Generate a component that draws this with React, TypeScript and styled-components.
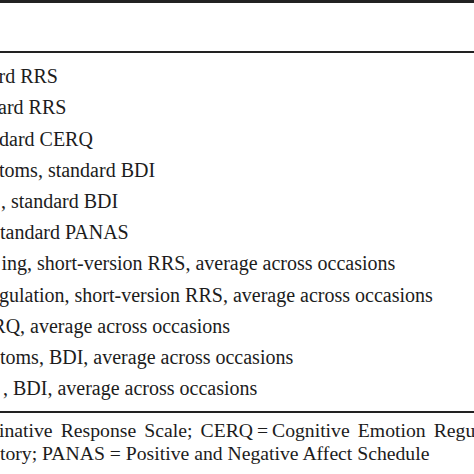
import styled, { createGlobalStyle } from "styled-components";

const GlobalStyle = createGlobalStyle`
  html, body {
    margin: 0;
    padding: 0;
    background: #ffffff;
  }
`;

const Page = styled.div`
  width: 474px;
  height: 474px;
  overflow: hidden;
  background: #ffffff;
  color: #1c1c1c;
  font-family: "Liberation Serif", "Times New Roman", serif;
`;

const Rule = styled.div<{ $thick: number; $gap?: number }>`
  height: ${(p) => p.$thick}px;
  margin-top: ${(p) => p.$gap ?? 0}px;
  background: #222222;
`;

const HeaderBand = styled.div`
  height: 48px;
`;

const Body = styled.div`
  padding-top: 8.2px;
  display: flex;
  flex-direction: column;
`;

const Row = styled.div<{ $shift: number }>`
  font-size: 20px;
  line-height: 31.2px;
  white-space: nowrap;
  margin-left: ${(p) => p.$shift}px;
`;

const Notes = styled.div`
  padding-top: 5.8px;
  display: flex;
  flex-direction: column;
`;

const NoteLine = styled.div<{ $shift: number; $spacing: number }>`
  font-size: 19.7px;
  line-height: 23.5px;
  white-space: nowrap;
  margin-left: ${(p) => p.$shift}px;
  word-spacing: ${(p) => p.$spacing}px;
`;

const rows = [
  { text: "rd RRS", shift: -1.5 },
  { text: "ard RRS", shift: -2 },
  { text: "dard CERQ", shift: -1 },
  { text: "toms, standard BDI", shift: -1 },
  { text: ", standard BDI", shift: 1 },
  { text: "tandard PANAS", shift: 0 },
  { text: "ing, short-version RRS, average across occasions", shift: 1.5 },
  { text: "gulation, short-version RRS, average across occasions", shift: -1 },
  { text: "RQ, average across occasions", shift: -7.7 },
  { text: "toms, BDI, average across occasions", shift: 0 },
  { text: ", BDI, average across occasions", shift: 3 },
];

export default function App() {
  return (
    <>
      <GlobalStyle />
      <Page>
        <Rule $thick={3} />
        <HeaderBand />
        <Rule $thick={2} />
        <Body>
          {rows.map((r, i) => (
            <Row key={i} $shift={r.shift}>
              {r.text}
            </Row>
          ))}
        </Body>
        <Rule $thick={2} $gap={6.6} />
        <Notes>
          <NoteLine $shift={-1} $spacing={3.2}>
            inative Response Scale; CERQ{"\u2009=\u2009"}Cognitive Emotion Regulation
          </NoteLine>
          <NoteLine $shift={0} $spacing={0}>
            tory; PANAS = Positive and Negative Affect Schedule
          </NoteLine>
        </Notes>
      </Page>
    </>
  );
}
